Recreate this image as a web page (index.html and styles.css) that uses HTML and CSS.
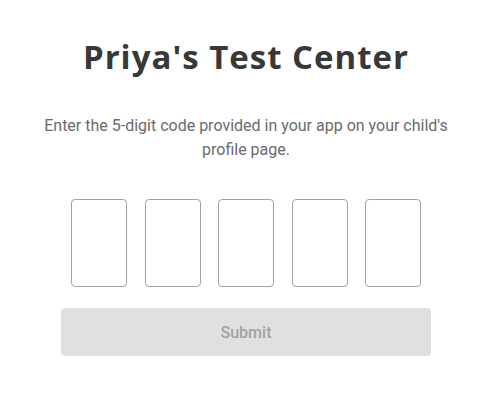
FILE: index.html
```html
<!DOCTYPE html>
<html lang="en">
<head>
<meta charset="utf-8">
<title>Priya's Test Center</title>
<link rel="stylesheet" href="styles.css">
</head>
<body>
<main class="page">
  <h1 class="title">Priya's Test Center</h1>
  <p class="lead">Enter the 5-digit code provided in your app on your child's profile page.</p>
  <form class="code-form">
    <div class="digits">
      <input class="digit" type="text" maxlength="1" aria-label="Digit 1">
      <input class="digit" type="text" maxlength="1" aria-label="Digit 2">
      <input class="digit" type="text" maxlength="1" aria-label="Digit 3">
      <input class="digit" type="text" maxlength="1" aria-label="Digit 4">
      <input class="digit" type="text" maxlength="1" aria-label="Digit 5">
    </div>
    <button class="submit" type="button" disabled>Submit</button>
  </form>
</main>
</body>
</html>
```

FILE: styles.css
```css
html, body {
  margin: 0;
  padding: 0;
  background: #ffffff;
}

.page {
  width: 492px;
  display: flex;
  flex-direction: column;
  align-items: center;
  padding-top: 35px;
}

.title {
  margin: 0;
  font-family: "Open Sans", "DejaVu Sans", sans-serif;
  font-weight: 700;
  font-size: 33px;
  line-height: 44px;
  color: #383838;
  letter-spacing: 1px;
}

.lead {
  margin: 35px 0 0;
  width: 420px;
  text-align: center;
  font-family: Roboto, "Liberation Sans", sans-serif;
  font-size: 16px;
  line-height: 24px;
  color: #6b6b6b;
}

.code-form {
  margin-top: 37px;
  display: flex;
  flex-direction: column;
  align-items: center;
}

.digits {
  display: flex;
  gap: 17.5px;
}

.digit {
  box-sizing: border-box;
  width: 56px;
  height: 88px;
  margin: 0;
  padding: 0;
  border: 1px solid #a3a3a3;
  border-radius: 4px;
  background: #fff;
}

.submit {
  margin-top: 21px;
  width: 370px;
  height: 48px;
  border: none;
  border-radius: 4px;
  background: #e0e0e0;
  color: #a3a3a3;
  font-family: Roboto, "Liberation Sans", sans-serif;
  font-weight: 500;
  font-size: 16px;
}
```
